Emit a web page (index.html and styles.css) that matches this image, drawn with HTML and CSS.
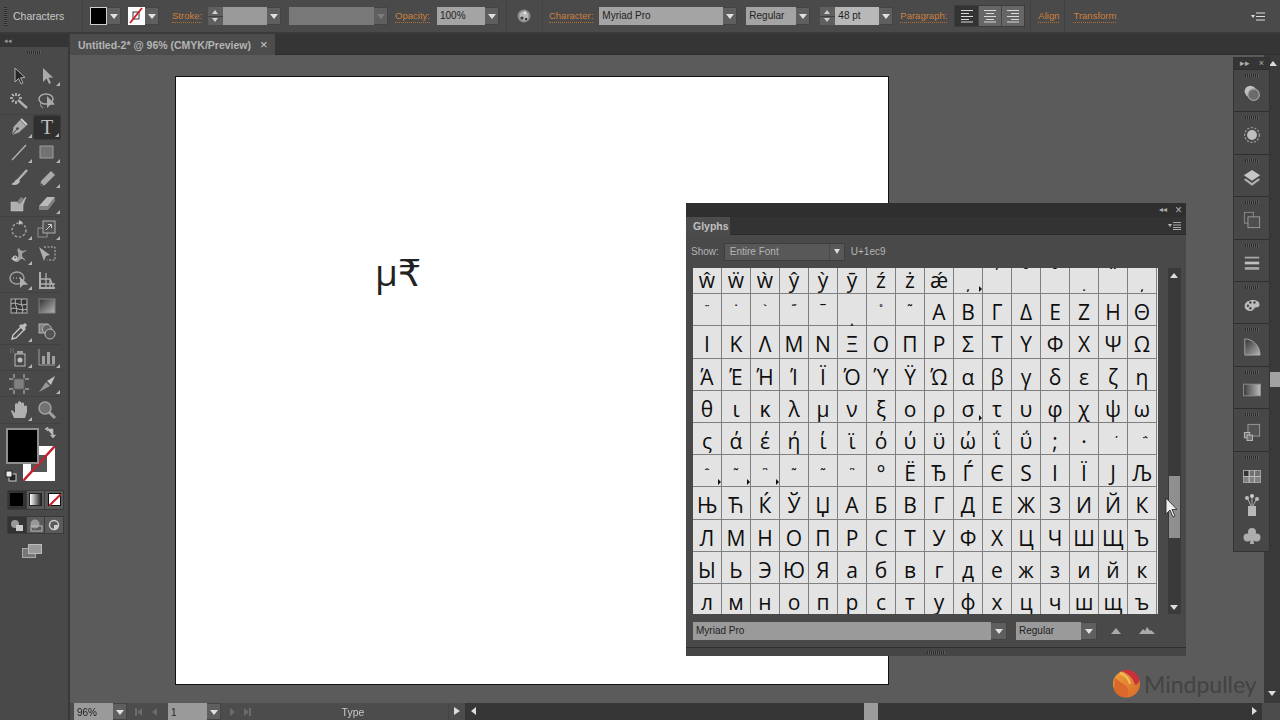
FILE: index.html
```html
<!DOCTYPE html>
<html>
<head>
    <title>Untitled-2* @ 96% (CMYK/Preview)</title>
    <link rel="stylesheet" href="styles.css">
</head>
<body>
<div class="app">
    <svg class="defs" width="0" height="0">
        <defs>
            <linearGradient id="greyFade" x1="0" y1="0" x2="1" y2="1"><stop offset="0" stop-color="#2e2e2e"/><stop offset="1" stop-color="#c4c4c4"/></linearGradient>
            <linearGradient id="greyBar" x1="0" y1="0" x2="1" y2="0"><stop offset="0" stop-color="#3a3a3a"/><stop offset="1" stop-color="#cfcfcf"/></linearGradient>
            <linearGradient id="logoFill" x1="0" y1="0" x2="1" y2="1"><stop offset="0" stop-color="#eda13a"/><stop offset="1" stop-color="#d9682a"/></linearGradient>
        </defs>
    </svg>

    <!-- top control bar -->
    <div class="control-bar">
        <span class="grip-v"></span>
        <span class="bar-title">Characters</span>
        <span class="bar-sep sep-title"></span>
        <span class="swatch swatch-black"></span>
        <span class="arrow-btn"></span>
        <span class="swatch swatch-none"><svg width="16" height="17" viewBox="0 0 16 17"><rect x="5" y="5" width="6" height="7" fill="none" stroke="#333"/><path d="M2 16L14 1" stroke="#d3222e" stroke-width="2"/></svg></span>
        <span class="arrow-btn"></span>
        <a class="link stroke-link">Stroke:</a>
        <span class="spinner"></span>
        <span class="field stroke-field"></span>
        <span class="arrow-btn"></span>
        <span class="field muted-field"></span>
        <span class="arrow-btn arrow-dim"></span>
        <a class="link opacity-link">Opacity:</a>
        <span class="field opacity-field">100%</span>
        <span class="arrow-btn"></span>
        <span class="bar-sep sep-globe"></span>
        <svg class="globe" width="14" height="14" viewBox="0 0 14 14"><circle cx="7" cy="7" r="6.5" fill="#8d8d8d"/><circle cx="7" cy="7" r="4.5" fill="#b9b9b9"/><circle cx="5" cy="9" r="1.6" fill="#3c3c3c"/><circle cx="9" cy="10" r="1.2" fill="#3c3c3c"/><circle cx="8" cy="4" r="1.4" fill="#e8e8e8"/></svg>
        <span class="bar-sep"></span>
        <a class="link char-link">Character:</a>
        <span class="field font-field">Myriad Pro</span>
        <span class="arrow-btn"></span>
        <span class="field style-field">Regular</span>
        <span class="arrow-btn"></span>
        <span class="spinner size-spinner"></span>
        <span class="field size-field">48 pt</span>
        <span class="arrow-btn"></span>
        <a class="link para-link">Paragraph:</a>
        <span class="align-group">
            <span class="align-btn align-on"><svg width="14" height="14" viewBox="0 0 14 14"><path d="M1 1.5h12M1 4.5h8M1 7.5h12M1 10.5h8M1 13h12"/></svg></span>
            <span class="align-btn"><svg width="14" height="14" viewBox="0 0 14 14"><path d="M1 1.5h12M3 4.5h8M1 7.5h12M3 10.5h8M1 13h12"/></svg></span>
            <span class="align-btn"><svg width="14" height="14" viewBox="0 0 14 14"><path d="M1 1.5h12M5 4.5h8M1 7.5h12M5 10.5h8M1 13h12"/></svg></span>
        </span>
        <span class="bar-sep sep-align"></span>
        <a class="link">Align</a>
        <span class="bar-sep sep-transform"></span>
        <a class="link">Transform</a>
        <svg class="bar-menu" width="14" height="9" viewBox="0 0 14 9"><path d="M0 3h4L2 6z" fill="#ddd"/><path d="M5 1h9M5 4.500h9M5 8h9" stroke="#ddd"/></svg>
    </div>

    <div class="workspace">
        <!-- tools -->
        <div class="toolbox">
            <div class="toolbox-head">◂◂</div>
            <div class="toolbox-grip"><span class="grip-h"></span></div>

            <div class="tool-group">
                <span class="tool"><svg viewBox="0 0 20 20" width="20" height="20"><path d="M6 2v14l3.500-3.500 2.500 5.500 2-1-2.500-5.200 4.500-.3z" fill="#222" stroke="#bbb"/></svg></span>
                <span class="tool more"><svg viewBox="0 0 20 20" width="20" height="20"><path d="M6 2v14l3.500-3.500 2.500 5.500 2-1-2.500-5.200 4.500-.3z" fill="#b5b5b5"/></svg></span>
                <span class="tool"><svg viewBox="0 0 20 20" width="20" height="20"><path d="M9 9l9 8" stroke="#bbb" stroke-width="2.500"/><path d="M7 2v3M7 10v3M1 7h3M10 7h3M3 3l2 2M11 3l-2 2M3 11l2-2" stroke="#d4d4d4" stroke-width="1.500"/></svg></span>
                <span class="tool"><svg viewBox="0 0 20 20" width="20" height="20"><ellipse cx="9" cy="8" rx="7" ry="5" fill="none" stroke="#b5b5b5" stroke-width="1.500"/><path d="M4 12c-1 2 0 4 2 5" fill="none" stroke="#b5b5b5"/><path d="M10 5v12l3-3 5-.5z" fill="#b5b5b5"/></svg></span>
            </div>

            <div class="tool-group">
                <span class="tool more"><svg viewBox="0 0 20 20" width="20" height="20"><path d="M3 18l1.500-8L11 3l6 6-7 6.500z" fill="#b5b5b5"/><path d="M3 18l5-6" stroke="#444"/><circle cx="8.500" cy="11.500" r="1.300" fill="#444"/><path d="M12 2l6 6" stroke="#ddd" stroke-width="2"/></svg></span>
                <span class="tool tool-on more"><span class="type-t">T</span></span>
                <span class="tool more"><svg viewBox="0 0 20 20" width="20" height="20"><path d="M3 18L17 3" stroke="#c0c0c0" stroke-width="1.300"/></svg></span>
                <span class="tool more"><svg viewBox="0 0 20 20" width="20" height="20"><rect x="3" y="4" width="13" height="12" fill="#777" stroke="#a8a8a8"/></svg></span>
                <span class="tool"><svg viewBox="0 0 20 20" width="20" height="20"><path d="M18 2L9 12" stroke="#bbb" stroke-width="2.500"/><path d="M9 11c-3 0-3 4-7 5 3 2 8 1 9-3z" fill="#c8c8c8"/></svg></span>
                <span class="tool more"><svg viewBox="0 0 20 20" width="20" height="20"><path d="M3 18l1-5L14 3l4 4L8 17z" fill="#b5b5b5"/><path d="M3 18l1-3 2 2z" fill="#333"/></svg></span>
                <span class="tool"><svg viewBox="0 0 20 20" width="20" height="20"><path d="M2 9h6l2 2 7-7-3 8v6H2z" fill="#bbb" stroke="#ddd" stroke-width=".5"/><path d="M8 9l4-5 3 2-4 5z" fill="#888"/></svg></span>
                <span class="tool more"><svg viewBox="0 0 20 20" width="20" height="20"><path d="M2 13l8-9h8l-7 9z" fill="#c6c6c6"/><path d="M2 13h9v4H2zM11 13l7-9v4l-7 9z" fill="#8a8a8a"/></svg></span>
            </div>

            <div class="tool-group">
                <span class="tool more"><svg viewBox="0 0 20 20" width="20" height="20"><circle cx="10" cy="11" r="7" fill="none" stroke="#aaa" stroke-width="1.500" stroke-dasharray="2.500 1.800"/><path d="M10 1v5l4-2.500z" fill="#ccc"/></svg></span>
                <span class="tool more"><svg viewBox="0 0 20 20" width="20" height="20"><rect x="1" y="9" width="9" height="9" fill="none" stroke="#999"/><rect x="6" y="2" width="12" height="12" fill="#555" stroke="#bbb"/><path d="M9 11l5-5M11 5.500h3.500V9" fill="none" stroke="#ddd"/></svg></span>
                <span class="tool more"><svg viewBox="0 0 20 20" width="20" height="20"><path d="M2 15c3-5 5 2 7-2s-3-7 1-9c2 4 4 3 8 2-3 3-5 2-5 5s3 3 4 6c-3-2-5-3-7 0-2 2-4 1-8-2z" fill="#aaa"/><circle cx="6" cy="14" r="2" fill="none" stroke="#eee"/></svg></span>
                <span class="tool"><svg viewBox="0 0 20 20" width="20" height="20"><path d="M2 3l11 8-4 1-2 5z" fill="#bbb"/><path d="M7 3h11v13H10" fill="none" stroke="#ccc" stroke-dasharray="2 1.500"/></svg></span>
                <span class="tool more"><svg viewBox="0 0 20 20" width="20" height="20"><ellipse cx="8" cy="8" rx="7" ry="6" fill="none" stroke="#aaa" stroke-width="1.500"/><path d="M4 8h1M7 8h1M10 8h1" stroke="#ddd"/><path d="M11 7v11l3-3 5-.5z" fill="#bbb"/></svg></span>
                <span class="tool"><svg viewBox="0 0 20 20" width="20" height="20"><path d="M3 2v16h15" fill="none" stroke="#bbb" stroke-width="2"/><path d="M9 3v15M3 9h10l4 9M3 14h15M13 9v9" fill="none" stroke="#bbb" stroke-width="1.300"/></svg></span>
            </div>

            <div class="tool-group">
                <span class="tool"><svg viewBox="0 0 20 20" width="20" height="20"><rect x="2" y="3" width="16" height="14" fill="#333" stroke="#bbb"/><path d="M2 8c5-3 9 3 16 0M2 13c5-3 9 3 16 0M7 3c-3 5 3 9 0 14M13 3c-3 5 3 9 0 14" fill="none" stroke="#ccc"/></svg></span>
                <span class="tool"><svg viewBox="0 0 20 20" width="20" height="20"><rect x="2" y="3" width="16" height="14" fill="url(#greyFade)" stroke="#888"/></svg></span>
                <span class="tool more"><svg viewBox="0 0 20 20" width="20" height="20"><path d="M3 18l1-4 8-8 3 3-8 8z" fill="none" stroke="#ddd" stroke-width="1.300"/><path d="M10 5l5 5 2-2-1-1 2-3-2-2-3 2-1-1z" fill="#c8c8c8"/></svg></span>
                <span class="tool"><svg viewBox="0 0 20 20" width="20" height="20"><rect x="2" y="3" width="9" height="9" fill="#888" stroke="#bbb"/><circle cx="10" cy="8" r="4.500" fill="#666" stroke="#bbb"/><circle cx="13" cy="13" r="5" fill="#555" stroke="#ccc"/></svg></span>
            </div>

            <div class="tool-group">
                <span class="tool more"><svg viewBox="0 0 20 20" width="20" height="20"><rect x="6" y="7" width="10" height="12" fill="#4a4a4a" stroke="#c4c4c4"/><circle cx="11" cy="13" r="2.500" fill="#ccc"/><rect x="8" y="4" width="6" height="3" fill="#aaa"/><path d="M1 2h1M4 2h1M1 5h1M4 5h1M2.500 3.500h1" stroke="#999"/></svg></span>
                <span class="tool more"><svg viewBox="0 0 20 20" width="20" height="20"><path d="M2 2v16h16" fill="none" stroke="#aaa"/><path d="M5 9h3v8H5zM10 5h3v12h-3zM15 9h3v8h-3z" fill="#aaa"/></svg></span>
            </div>

            <div class="tool-group">
                <span class="tool"><svg viewBox="0 0 20 20" width="20" height="20"><rect x="5" y="5" width="10" height="10" fill="#888" stroke="#666"/><path d="M5 0v4M15 0v4M5 16v4M15 16v4M0 5h4M0 15h4M16 5h4M16 15h4" stroke="#d4d4d4"/></svg></span>
                <span class="tool more"><svg viewBox="0 0 20 20" width="20" height="20"><path d="M2 18l7-10 4 4z" fill="#a0a0a0"/><path d="M10 7l8-5-4 9z" fill="#ccc"/></svg></span>
            </div>

            <div class="tool-group">
                <span class="tool more"><svg viewBox="0 0 20 20" width="20" height="20"><path d="M5 18l-3-7 1-1 3 3V4l1.500-1L9 4v5-7l1.500-1L12 2v7-6l1.500-.5L15 3v7-4l1.500-.5L18 6v6l-2 6z" fill="#bcbcbc"/></svg></span>
                <span class="tool"><svg viewBox="0 0 20 20" width="20" height="20"><path d="M12 12l6 6" stroke="#aaa" stroke-width="3"/><circle cx="8" cy="8" r="6" fill="#777" stroke="#aaa" stroke-width="1.500"/></svg></span>
            </div>

            <div class="swatches">
                <span class="stroke-box"><svg width="32" height="35" viewBox="0 0 32 35"><rect x="8" y="9" width="16" height="17" fill="#555"/><path d="M0 35L32 0" stroke="#c6202f" stroke-width="2.500"/></svg></span>
                <span class="fill-box"></span>
                <svg class="swap-icon" width="12" height="12" viewBox="0 0 12 12"><path d="M2 2h6v7M8 11L5.500 8h5zM3 0L0 2l3 2z" fill="#bbb" stroke="#bbb" stroke-width=".6"/></svg>
                <svg class="default-icon" width="12" height="12" viewBox="0 0 12 12"><rect x="4" y="4" width="7" height="7" fill="#222" stroke="#ccc"/><rect x="1" y="1" width="6" height="6" fill="#eee" stroke="#222"/></svg>
            </div>

            <div class="mode-row">
                <span class="mode mode-on"><span class="mode-black"></span></span>
                <span class="mode"><span class="mode-grad"></span></span>
                <span class="mode"><span class="mode-none"><svg width="12" height="12" viewBox="0 0 12 12"><path d="M0 12L12 0" stroke="#c6202f" stroke-width="2"/></svg></span></span>
            </div>

            <div class="mode-row draw-row">
                <span class="mode mode-on"><svg width="14" height="14" viewBox="0 0 14 14"><circle cx="5" cy="6" r="4" fill="#999"/><rect x="6" y="7" width="7" height="6" fill="#ccc"/></svg></span>
                <span class="mode"><svg width="14" height="14" viewBox="0 0 14 14"><circle cx="6" cy="6" r="4.500" fill="#999"/><rect x="2" y="8" width="11" height="5" fill="none" stroke="#bbb"/></svg></span>
                <span class="mode"><svg width="14" height="14" viewBox="0 0 14 14"><circle cx="7" cy="7" r="4.500" fill="none" stroke="#ccc" stroke-width="1.500"/><rect x="7" y="7" width="4" height="4" fill="#ccc"/></svg></span>
            </div>

            <svg class="screen-mode" width="20" height="14" viewBox="0 0 20 14"><rect x=".5" y="4.500" width="13" height="9" fill="#777" stroke="#aaa"/><rect x="6.500" y=".5" width="13" height="9" fill="#999" stroke="#bbb"/></svg>
        </div>

        <!-- document -->
        <div class="doc">
            <div class="tab-row">
                <div class="doc-tab"><span class="doc-title">Untitled-2* @ 96% (CMYK/Preview)</span><span class="tab-close">×</span></div>
            </div>
            <div class="canvas-row">
                <div class="canvas">
                    <div class="artboard"><span class="art-text">μ₹</span></div>
                    <div class="watermark">
                        <svg width="28" height="29" viewBox="0 0 28 29"><circle cx="13.500" cy="15" r="13.500" fill="url(#logoFill)"/><path d="M8 2c6-3 15-1 18 7 1 4-1 6-4 7-1-6-7-12-14-14z" fill="#c8303a"/><path d="M2 9c3 3 8 5 11 8s3 7 1 11c-6 1-11-2-13-8z" fill="#d9682a"/><path d="M7 4c5 2 9 6 10 11" stroke="#f4c05a" stroke-width="2" fill="none"/></svg>
                        <span class="watermark-text">Mindpulley</span>
                    </div>
                </div>
                <div class="v-scroll">
                    <span class="tri tri-up"></span>
                    <span class="v-thumb"></span>
                    <span class="tri tri-down"></span>
                </div>
            </div>
            <div class="status-bar">
                <span class="field zoom-field">96%</span>
                <span class="arrow-btn"></span>
                <span class="nav nav-first"></span>
                <span class="nav nav-prev"></span>
                <span class="field page-field">1</span>
                <span class="arrow-btn"></span>
                <span class="nav nav-next"></span>
                <span class="nav nav-last"></span>
                <span class="status-label">Type</span>
                <span class="status-arrow"></span>
                <div class="h-scroll">
                    <span class="tri tri-left"></span>
                    <span class="h-thumb"></span>
                    <span class="tri tri-right"></span>
                </div>
                <span class="corner"></span>
            </div>
        </div>
    </div>

    <!-- collapsed dock -->
    <div class="dock">
        <div class="dock-head"><span>▸▸</span><span>×</span></div>
        <div class="dock-item"><span class="grip-h"></span><svg viewBox="0 0 22 22"><circle cx="9" cy="9" r="7" fill="#d2d2d2"/><circle cx="13" cy="13" r="7" fill="#707070" stroke="#b0b0b0" stroke-width="1.500"/></svg></div>
        <div class="dock-item"><span class="grip-h"></span><svg viewBox="0 0 22 22"><circle cx="11" cy="11" r="9" fill="none" stroke="#aaa" stroke-width="1.500" stroke-dasharray="2.500 2"/><circle cx="11" cy="11" r="6" fill="#d0d0d0"/></svg></div>
        <div class="dock-item"><span class="grip-h"></span><svg viewBox="0 0 20 20"><path d="M10 1l9 6-9 6-9-6z" fill="#d8d8d8"/><path d="M3 10.500l7 5 7-5 2 1.500-9 6.500L1 12z" fill="#c0c0c0"/></svg></div>
        <div class="dock-item"><span class="grip-h"></span><svg viewBox="0 0 20 20"><rect x="1.500" y="1.500" width="10" height="12" fill="none" stroke="#999"/><rect x="5.500" y="6.500" width="13" height="12" fill="#505050" stroke="#aaa"/></svg></div>
        <div class="dock-item"><span class="grip-h"></span><svg viewBox="0 0 20 16"><path d="M2 2h16" stroke="#b5b5b5" stroke-width="2"/><path d="M2 8h16" stroke="#d0d0d0" stroke-width="3"/><path d="M2 14h16" stroke="#b5b5b5" stroke-width="3"/></svg></div>
        <div class="dock-item"><span class="grip-h"></span><svg viewBox="0 0 22 18"><path d="M2 10c0-5 7-8 12-7s7 4 6 7-5 1-6 3-3 4-7 3-5-3-5-6z" fill="#cdcdcd"/><circle cx="6" cy="10" r="1.500" fill="#444"/><circle cx="9" cy="6" r="1.500" fill="#444"/><circle cx="14" cy="6" r="1.500" fill="#444"/><circle cx="9" cy="13" r="1.500" fill="#444"/></svg></div>
        <div class="dock-item"><span class="grip-h"></span><svg viewBox="0 0 20 20"><path d="M2 1c9 0 17 8 17 18H2z" fill="url(#greyFade)" stroke="#bbb"/></svg></div>
        <div class="dock-item"><span class="grip-h"></span><svg viewBox="0 0 20 14"><rect x=".5" y=".5" width="19" height="13" fill="url(#greyBar)" stroke="#999"/></svg></div>
        <div class="dock-item"><span class="grip-h"></span><svg viewBox="0 0 20 20"><rect x="5.500" y="1.500" width="13" height="13" fill="#555" stroke="#aaa"/><rect x="1.500" y="10.500" width="6" height="6" fill="#777" stroke="#ccc"/><rect x="4.500" y="13.500" width="6" height="6" fill="#777" stroke="#ccc"/></svg></div>
        <div class="dock-last">
            <span class="grip-h"></span>
            <svg width="18" height="13" viewBox="0 0 18 13"><rect width="18" height="13" fill="#aaa"/><path d="M1 1h5v5H1z" fill="#333"/><path d="M7 1h4v5H7zM12 1h5v5h-5z" fill="#777"/><path d="M1 7h5v5H1zM7 7h4v5H7zM12 7h5v5h-5z" fill="#888"/><path d="M6 0v13M11.500 0v13M0 6.500h18" stroke="#ccc"/></svg>
            <svg width="16" height="22" viewBox="0 0 16 22"><rect x="4" y="12" width="8" height="10" fill="#c8c8c8"/><path d="M7 12L3 3M8 12V1M9 12l4-8" stroke="#bbb"/><circle cx="3" cy="4" r="2" fill="#ccc"/><circle cx="8" cy="2" r="2" fill="#ddd"/><circle cx="13" cy="5" r="2" fill="#ccc"/></svg>
            <svg width="18" height="18" viewBox="0 0 18 18"><circle cx="9" cy="5" r="4" fill="#bdbdbd"/><circle cx="4.500" cy="10.500" r="4" fill="#bdbdbd"/><circle cx="13.500" cy="10.500" r="4" fill="#bdbdbd"/><path d="M8 9h2l1 8H7z" fill="#bdbdbd"/></svg>
        </div>
    </div>

    <!-- glyphs panel -->
    <div class="glyphs-panel">
        <div class="panel-top"><span>◂◂</span><span class="panel-close">×</span></div>
        <div class="panel-tabs">
            <span class="panel-tab">Glyphs</span>
            <svg class="panel-menu" width="13" height="8" viewBox="0 0 13 8"><path d="M0 2h4L2 5z" fill="#bbb"/><path d="M5 .5h8M5 3h8M5 5.500h8M5 7.500h8" stroke="#aaa"/></svg>
        </div>
        <div class="show-row">
            <span>Show:</span>
            <span class="show-select"><span class="show-value">Entire Font</span><span class="show-arrow"></span></span>
            <span class="code-point">U+1ec9</span>
        </div>
        <div class="glyph-area">
            <div class="glyph-view">
                <div class="glyph-grid">
                    <span>ŵ</span><span>ẅ</span><span>ẁ</span><span>ŷ</span><span>ỳ</span><span>ȳ</span><span>ź</span><span>ż</span><span>ǽ</span><span class="mark mark-low">,<b class="alt"></b></span><span class="mark mark-cut">,</span><span class="mark mark-cut">o</span><span class="mark mark-cut">o</span><span class="mark mark-low">.</span><span class="mark mark-cut">x</span><span class="mark mark-low">,</span>
                    <span class="mark">¨</span><span class="mark">˙</span><span class="mark">`</span><span class="mark">˝</span><span class="mark">¯</span><span class="mark mark-low">¸</span><span class="mark">˚</span><span class="mark">˜</span><span>Α</span><span>Β</span><span>Γ</span><span>Δ</span><span>Ε</span><span>Ζ</span><span>Η</span><span>Θ</span>
                    <span>Ι</span><span>Κ</span><span>Λ</span><span>Μ</span><span>Ν</span><span>Ξ</span><span>Ο</span><span>Π</span><span>Ρ</span><span>Σ</span><span>Τ</span><span>Υ</span><span>Φ</span><span>Χ</span><span>Ψ</span><span>Ω</span>
                    <span>Ά</span><span>Έ</span><span>Ή</span><span>Ί</span><span>Ϊ</span><span>Ό</span><span>Ύ</span><span>Ϋ</span><span>Ώ</span><span>α</span><span>β</span><span>γ</span><span>δ</span><span>ε</span><span>ζ</span><span>η</span>
                    <span>θ</span><span>ι</span><span>κ</span><span>λ</span><span>μ</span><span>ν</span><span>ξ</span><span>ο</span><span>ρ</span><span>σ<b class="alt"></b></span><span>τ</span><span>υ</span><span>φ</span><span>χ</span><span>ψ</span><span>ω</span>
                    <span>ς</span><span>ά</span><span>έ</span><span>ή</span><span>ί</span><span>ϊ</span><span>ό</span><span>ύ</span><span>ϋ</span><span>ώ</span><span>ΐ</span><span>ΰ</span><span>;</span><span>·</span><span class="mark mark-deep">΄</span><span class="mark mark-deep">΅</span>
                    <span class="mark mark-deep">ˆ<b class="alt"></b></span><span class="mark mark-deep">˜<b class="alt"></b></span><span class="mark mark-deep">῝<b class="alt"></b></span><span class="mark mark-deep">῀</span><span class="mark mark-deep">῀</span><span class="mark mark-deep">῝</span><span>°</span><span>Ё</span><span>Ђ</span><span>Ѓ</span><span>Є</span><span>Ѕ</span><span>І</span><span>Ї</span><span>Ј</span><span>Љ</span>
                    <span>Њ</span><span>Ћ</span><span>Ќ</span><span>Ў</span><span>Џ</span><span>А</span><span>Б</span><span>В</span><span>Г</span><span>Д</span><span>Е</span><span>Ж</span><span>З</span><span>И</span><span>Й</span><span>К</span>
                    <span>Л</span><span>М</span><span>Н</span><span>О</span><span>П</span><span>Р</span><span>С</span><span>Т</span><span>У</span><span>Ф</span><span>Х</span><span>Ц</span><span>Ч</span><span>Ш</span><span>Щ</span><span>Ъ</span>
                    <span>Ы</span><span>Ь</span><span>Э</span><span>Ю</span><span>Я</span><span>а</span><span>б</span><span>в</span><span>г</span><span>д</span><span>е</span><span>ж</span><span>з</span><span>и</span><span>й</span><span>к</span>
                    <span>л</span><span>м</span><span>н</span><span>о</span><span>п</span><span>р</span><span>с</span><span>т</span><span>у</span><span>ф</span><span>х</span><span>ц</span><span>ч</span><span>ш</span><span>щ</span><span>ъ</span>
                </div>
            </div>
            <div class="glyph-scroll">
                <span class="tri tri-up"></span>
                <span class="glyph-thumb"></span>
                <span class="tri tri-down"></span>
            </div>
        </div>
        <div class="panel-foot">
            <span class="field foot-font">Myriad Pro</span>
            <span class="arrow-btn foot-arrow"></span>
            <span class="field foot-style">Regular</span>
            <span class="arrow-btn foot-arrow"></span>
            <svg class="mountain" width="10" height="6" viewBox="0 0 10 6"><path d="M0 6l5-6 5 6z" fill="#aaa"/></svg>
            <svg class="mountains" width="16" height="7" viewBox="0 0 16 7"><path d="M0 7l4-5 2 2 2-4 3 4 1-1 4 4z" fill="#aaa"/></svg>
        </div>
        <div class="panel-strip"><span class="grip-h"></span></div>
    </div>

    <svg class="cursor" width="12" height="21" viewBox="0 0 12 21"><path d="M1 1v16l4-4 3 7 2-1-3-6.500h5z" fill="#eee" stroke="#222" stroke-width=".8"/></svg>
</div>
</body>
</html>
```

FILE: styles.css
```css
* {
    box-sizing: border-box;
}

body {
    margin: 0;
    background-color: #5b5b5b;
    font-family: "Liberation Sans", Arial, sans-serif;
    font-size: 10px;
    color: #c4c4c4;
}

.app {
    position: relative;
    width: 1280px;
    height: 720px;
    overflow: hidden;
    display: flex;
    flex-direction: column;
    filter: blur(.35px);
}

.defs {
    position: absolute;
}

/* control bar */
.control-bar {
    height: 34px;
    flex: none;
    display: flex;
    align-items: center;
    background-color: #4a4a4a;
    border-bottom: 2px solid #3a3a3a;
}

.grip-v {
    width: 3px;
    height: 19px;
    margin-left: 4px;
    background: repeating-linear-gradient(to bottom, #2a2a2a 0, #2a2a2a 1px, #5a5a5a 1px, #5a5a5a 2px);
}

.bar-title {
    margin-left: 6px;
    width: 45px;
    font-size: 10.5px;
    color: #c8c8c8;
}

.bar-sep {
    flex: none;
    width: 1px;
    height: 32px;
    background-color: #424242;
}

.sep-title {
    margin: 0 7px 0 24px;
}

.swatch {
    flex: none;
    width: 17px;
    height: 18px;
    border: 1px solid #cfcfcf;
}

.swatch-black {
    background-color: #000;
}

.swatch-none {
    margin-left: 7px;
    background-color: #fff;
    border: none;
}

.arrow-btn {
    flex: none;
    position: relative;
    width: 14px;
    height: 18px;
    background-color: #5f5f5f;
    border: 1px solid #444;
    border-left: none;
}

.arrow-btn::after {
    content: "";
    position: absolute;
    left: 3px;
    top: 6px;
    border-left: 4px solid transparent;
    border-right: 4px solid transparent;
    border-top: 5px solid #e0e0e0;
}

.arrow-dim::after {
    border-top-color: #7c7c7c;
}

.link {
    flex: none;
    color: #cc8040;
    font-size: 9.5px;
    border-bottom: 1px dotted #b0702f;
    line-height: 12px;
}

.stroke-link {
    margin: 0 6px 0 13px;
}

.opacity-link {
    margin: 0 7px;
}

.char-link {
    margin: 0 6px;
}

.para-link {
    margin: 0 7px;
}

.spinner {
    position: relative;
    flex: none;
    width: 15px;
    height: 18px;
    background: linear-gradient(to bottom, #5f5f5f 48%, #3f3f3f 48%, #3f3f3f 54%, #5f5f5f 54%);
}

.spinner::before,
.spinner::after {
    content: "";
    position: absolute;
    left: 4px;
    border-left: 3.5px solid transparent;
    border-right: 3.5px solid transparent;
}

.spinner::before {
    top: 3px;
    border-bottom: 4px solid #d0d0d0;
}

.spinner::after {
    bottom: 3px;
    border-top: 4px solid #d0d0d0;
}

.field {
    flex: none;
    height: 18px;
    padding-left: 3px;
    background-color: #9a9a9a;
    color: #222;
    font-size: 10px;
    line-height: 18px;
    white-space: nowrap;
    overflow: hidden;
}

.stroke-field {
    width: 44px;
}

.muted-field {
    width: 85px;
    margin-left: 8px;
    background-color: #787878;
}

.opacity-field {
    width: 48px;
    background-color: #a4a4a4;
}

.sep-globe {
    margin-left: 7px;
}

.globe {
    flex: none;
    margin: 0 11px 0 10px;
}

.font-field {
    width: 124px;
    background-color: #a4a4a4;
}

.style-field {
    width: 50px;
    margin-left: 9px;
    background-color: #a4a4a4;
}

.size-spinner {
    margin-left: 10px;
}

.size-field {
    width: 44px;
    background-color: #b8b8b8;
}

.align-group {
    flex: none;
    display: flex;
    height: 22px;
    border: 1px solid #3c3c3c;
}

.align-btn {
    width: 23px;
    display: flex;
    align-items: center;
    justify-content: center;
    background-color: #666;
    border-left: 1px solid #444;
}

.align-btn path {
    stroke: #d8d8d8;
    fill: none;
}

.align-on {
    background-color: #333;
    border-left: none;
}

.sep-align {
    margin: 0 7px 0 5px;
}

.sep-transform {
    margin: 0 8px 0 5px;
}

.bar-menu {
    margin-left: auto;
    margin-right: 15px;
}

/* workspace */
.workspace {
    flex: 1;
    min-height: 0;
    display: flex;
}

.toolbox {
    width: 70px;
    flex: none;
    background-color: #494949;
    border-right: 2px solid #383838;
}

.toolbox-head {
    height: 13px;
    background-color: #353535;
    color: #9a9a9a;
    font-size: 7px;
    line-height: 13px;
    padding-left: 4px;
}

.toolbox-grip {
    height: 16px;
    padding-top: 4px;
    display: flex;
    justify-content: center;
}

.grip-h {
    display: block;
    flex: none;
    width: 14px;
    height: 3px;
    background: repeating-linear-gradient(to right, #2a2a2a 0, #2a2a2a 1px, #5c5c5c 1px, #5c5c5c 2px);
}

.tool-group {
    display: grid;
    grid-template-columns: 28px 28px;
    grid-auto-rows: 25.25px;
    padding-left: 5px;
    margin-right: 7px;
    border-bottom: 1px solid #414141;
}

.tool {
    position: relative;
    display: flex;
    align-items: center;
    justify-content: center;
}

.tool svg {
    opacity: .9;
}

.tool.more::after {
    content: "";
    position: absolute;
    right: 1px;
    bottom: 2px;
    border-left: 4px solid transparent;
    border-bottom: 4px solid #b5b5b5;
}

.tool-on {
    background-color: #2f2f2f;
    border: 1px solid #3c3c3c;
    border-radius: 2px;
}

.type-t {
    font-family: "Liberation Serif", serif;
    font-size: 20px;
    line-height: 1;
    color: #bdbdbd;
}

.swatches {
    position: relative;
    height: 60px;
}

.fill-box {
    position: absolute;
    left: 6px;
    top: 4px;
    width: 33px;
    height: 36px;
    background-color: #000;
    border: 2px solid #8f8f8f;
}

.stroke-box {
    position: absolute;
    left: 23px;
    top: 22px;
    width: 32px;
    height: 35px;
    background-color: #fff;
}

.stroke-box svg {
    display: block;
}

.swap-icon {
    position: absolute;
    left: 45px;
    top: 3px;
}

.default-icon {
    position: absolute;
    left: 5px;
    top: 46px;
}

.mode-row {
    display: flex;
    width: 57px;
    height: 20px;
    margin: 6px 0 0 7px;
    background-color: #3a3a3a;
    padding: 1px;
    gap: 1px;
}

.draw-row {
    height: 18px;
    margin-top: 6px;
}

.mode {
    flex: 1;
    display: flex;
    align-items: center;
    justify-content: center;
    background-color: #5a5a5a;
}

.mode-on {
    background-color: #333;
}

.mode-black {
    width: 13px;
    height: 13px;
    background-color: #000;
}

.mode-grad {
    width: 13px;
    height: 13px;
    background: linear-gradient(to right, #fff, #222);
    border: 1px solid #222;
}

.mode-none {
    width: 13px;
    height: 13px;
    background-color: #fff;
    border: 1px solid #111;
}

.mode-none svg {
    display: block;
}

.screen-mode {
    display: block;
    margin: 10px 0 0 22px;
}

/* document */
.doc {
    flex: 1;
    min-width: 0;
    display: flex;
    flex-direction: column;
}

.tab-row {
    height: 21px;
    flex: none;
    background-color: #353535;
    border-bottom: 1px solid #2e2e2e;
}

.doc-tab {
    width: 205px;
    height: 21px;
    display: flex;
    align-items: center;
    padding-left: 8px;
    background-color: #4c4c4c;
}

.doc-title {
    font-size: 10.5px;
    font-weight: bold;
    color: #b4b4b4;
    width: 182px;
}

.tab-close {
    font-size: 13px;
    color: #c8c8c8;
}

.canvas-row {
    flex: 1;
    min-height: 0;
    display: flex;
}

.canvas {
    position: relative;
    flex: 1;
    background-color: #5b5b5b;
}

.artboard {
    position: absolute;
    left: 105px;
    top: 21px;
    width: 714px;
    height: 609px;
    background-color: #fff;
    border: 1px solid #111;
}

.art-text {
    position: absolute;
    left: 199px;
    top: 168px;
    font-family: "Open Sans", "DejaVu Sans", sans-serif;
    font-size: 37px;
    line-height: 54px;
    color: #222;
    white-space: nowrap;
}

.watermark {
    position: absolute;
    left: 1043px;
    top: 614px;
    display: flex;
    align-items: center;
    gap: 3px;
}

.watermark-text {
    font-family: "Lato", "Open Sans", sans-serif;
    font-size: 23px;
    color: #434343;
}

.v-scroll {
    position: relative;
    width: 16px;
    flex: none;
    background-color: #3a3a3a;
}

.tri {
    position: absolute;
    width: 0;
    height: 0;
    border-style: solid;
    border-color: transparent;
}

.tri-up {
    border-width: 0 4px 5px;
    border-bottom-color: #dcdcdc;
}

.tri-down {
    border-width: 5px 4px 0;
    border-top-color: #dcdcdc;
}

.tri-left {
    border-width: 4px 5px 4px 0;
    border-right-color: #dcdcdc;
}

.tri-right {
    border-width: 4px 0 4px 5px;
    border-left-color: #dcdcdc;
}

.v-scroll .tri-up {
    top: 6px;
    left: 5px;
}

.v-scroll .tri-down {
    bottom: 7px;
    left: 4px;
}

.v-thumb {
    position: absolute;
    top: 317px;
    left: 0;
    width: 16px;
    height: 15px;
    background-color: #a2a2a2;
}

.status-bar {
    height: 17px;
    flex: none;
    display: flex;
    align-items: stretch;
    background-color: #4c4c4c;
    padding-left: 4px;
}

.status-bar .arrow-btn {
    height: 17px;
}

.status-bar .field {
    height: 17px;
    line-height: 20px;
}

.zoom-field {
    width: 39px;
}

.page-field {
    width: 39px;
}

.nav {
    position: relative;
    flex: none;
}

.nav::after {
    content: "";
    position: absolute;
    top: 5px;
    border-style: solid;
    border-color: transparent;
}

.nav-first::after,
.nav-prev::after {
    border-width: 4px 5px 4px 0;
    border-right-color: #6b6b6b;
}

.nav-next::after,
.nav-last::after {
    border-width: 4px 0 4px 5px;
    border-left-color: #6b6b6b;
}

.nav-first {
    width: 20px;
}

.nav-first::after {
    left: 10px;
}

.nav-first::before {
    content: "";
    position: absolute;
    left: 8px;
    top: 5px;
    width: 2px;
    height: 8px;
    background-color: #6b6b6b;
}

.nav-prev {
    width: 21px;
}

.nav-prev::after {
    left: 5px;
}

.nav-next {
    width: 18px;
}

.nav-next::after {
    left: 9px;
}

.nav-last {
    width: 15px;
}

.nav-last::after {
    left: 5px;
}

.nav-last::before {
    content: "";
    position: absolute;
    left: 10px;
    top: 5px;
    width: 2px;
    height: 8px;
    background-color: #6b6b6b;
}

.status-label {
    width: 194px;
    padding-left: 4px;
    text-align: center;
    font-size: 10.5px;
    line-height: 19px;
    color: #c8c8c8;
}

.status-arrow {
    position: relative;
    width: 17px;
    flex: none;
    border-left: 1px solid #444;
}

.status-arrow::after {
    content: "";
    position: absolute;
    left: 5px;
    top: 4px;
    border-style: solid;
    border-color: transparent;
    border-width: 4px 0 4px 6px;
    border-left-color: #ddd;
}

.h-scroll {
    position: relative;
    flex: 1;
    background-color: #363636;
}

.h-scroll .tri-left {
    left: 6px;
    top: 4px;
}

.h-scroll .tri-right {
    right: 5px;
    top: 4px;
}

.h-thumb {
    position: absolute;
    left: 399px;
    top: 0;
    width: 14px;
    height: 17px;
    background-color: #9c9c9c;
}

.corner {
    width: 18px;
    flex: none;
    background-color: #4c4c4c;
}

/* dock */
.dock {
    position: absolute;
    left: 1233px;
    top: 57px;
    width: 37px;
    height: 495px;
    background-color: #474747;
    border: 1px solid #333;
    display: flex;
    flex-direction: column;
}

.dock-head {
    height: 11px;
    background-color: #353535;
    display: flex;
    justify-content: flex-end;
    gap: 9px;
    padding-right: 5px;
    color: #b0b0b0;
    font-size: 9px;
    line-height: 11px;
}

.dock-item {
    height: 42.4px;
    flex: none;
    display: flex;
    flex-direction: column;
    align-items: center;
    gap: 7px;
    padding-top: 4px;
    border-top: 1px solid #2f2f2f;
}

.dock-item svg {
    width: 18px;
    height: 18px;
    opacity: .88;
}

.dock-last {
    flex: 1;
    display: flex;
    flex-direction: column;
    align-items: center;
    gap: 11px;
    padding-top: 4px;
    border-top: 1px solid #2f2f2f;
}

.dock-last svg {
    flex: none;
    opacity: .88;
}

/* glyphs panel */
.glyphs-panel {
    position: absolute;
    left: 686px;
    top: 203px;
    width: 500px;
    height: 453px;
    background-color: #494949;
    display: flex;
    flex-direction: column;
}

.panel-top {
    height: 14px;
    flex: none;
    background-color: #2f2f2f;
    display: flex;
    justify-content: flex-end;
    gap: 8px;
    padding-right: 4px;
    color: #b0b0b0;
    font-size: 8px;
    line-height: 14px;
}

.panel-close {
    font-size: 12px;
}

.panel-tabs {
    position: relative;
    height: 18px;
    flex: none;
    background-color: #333;
    border-bottom: 1px solid #2b2b2b;
}

.panel-tab {
    display: block;
    width: 44px;
    height: 18px;
    padding-left: 7px;
    background-color: #4c4c4c;
    font-size: 10.5px;
    font-weight: bold;
    line-height: 18px;
    color: #c0c0c0;
}

.panel-menu {
    position: absolute;
    right: 5px;
    top: 5px;
}

.show-row {
    height: 33px;
    flex: none;
    display: flex;
    align-items: center;
    padding: 0 5px;
    font-size: 10px;
    color: #b4b4b4;
}

.show-select {
    width: 121px;
    height: 18px;
    margin-left: 5px;
    display: flex;
    align-items: center;
    background-color: #585858;
    border: 1px solid #3e3e3e;
}

.show-value {
    flex: 1;
    padding-left: 5px;
    border-right: 1px solid #4a4a4a;
    line-height: 16px;
}

.show-arrow {
    flex: none;
    width: 0;
    height: 0;
    margin: 0 4px;
    border-left: 3px solid transparent;
    border-right: 3px solid transparent;
    border-top: 5px solid #ddd;
}

.code-point {
    margin-left: 6px;
}

.glyph-area {
    height: 346px;
    flex: none;
    display: flex;
    padding-left: 7px;
}

.glyph-view {
    width: 465px;
    height: 346px;
    overflow: hidden;
}

.glyph-grid {
    display: grid;
    grid-template-columns: repeat(16, 29px);
    grid-auto-rows: 32.2px;
    margin-top: -6px;
    background-color: #e3e3e3;
}

.glyph-grid > span {
    position: relative;
    padding-top: 5px;
    border-right: 1px solid #808080;
    border-bottom: 1px solid #808080;
    text-align: center;
    font-family: "Open Sans", "Noto Sans", sans-serif;
    font-size: 21px;
    line-height: 27px;
    color: #0e0e0e;
    background-color: #e3e3e3;
}

.glyph-grid > .mark {
    padding-top: 6px;
    font-size: 11px;
    font-weight: bold;
    line-height: 17px;
}

.glyph-grid > .mark-deep {
    padding-top: 9px;
}

.glyph-grid > .mark-low {
    padding-top: 16px;
    font-size: 11px;
}

.glyph-grid > .mark-cut {
    padding-top: 0;
    font-size: 11px;
    line-height: 6px;
}

.alt {
    position: absolute;
    right: 0;
    bottom: 1px;
    border-top: 3px solid transparent;
    border-bottom: 3px solid transparent;
    border-left: 3px solid #111;
}

.glyph-scroll {
    position: relative;
    width: 13px;
    margin-left: 10px;
    background-color: #3a3a3a;
}

.glyph-scroll .tri-up {
    top: 5px;
    left: 2px;
}

.glyph-scroll .tri-down {
    bottom: 4px;
    left: 2px;
}

.glyph-thumb {
    position: absolute;
    left: 1px;
    top: 208px;
    width: 11px;
    height: 62px;
    background-color: #8f8f8f;
}

.panel-foot {
    height: 33px;
    flex: none;
    display: flex;
    align-items: center;
    padding-left: 7px;
}

.foot-arrow {
    width: 16px;
}

.foot-arrow::after {
    left: 4px;
}

.foot-font {
    width: 298px;
    background-color: #9a9a9a;
}

.foot-style {
    width: 65px;
    margin-left: 9px;
    background-color: #9a9a9a;
}

.mountain {
    margin-left: 14px;
}

.mountains {
    margin-left: 18px;
}

.panel-strip {
    flex: 1;
    display: flex;
    justify-content: center;
    padding-top: 3px;
    background-color: #454545;
    border-top: 1px solid #2e2e2e;
}

.panel-strip .grip-h {
    width: 18px;
}

.cursor {
    position: absolute;
    left: 1165px;
    top: 497px;
}
```
